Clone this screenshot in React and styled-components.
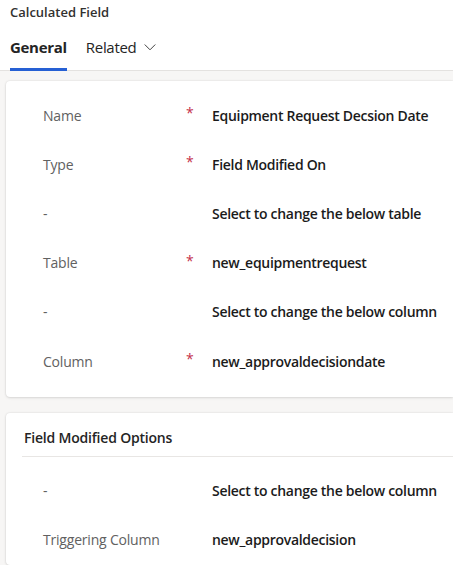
import React from 'react';
import styled, { createGlobalStyle } from 'styled-components';

const GlobalStyle = createGlobalStyle`
  html, body {
    margin: 0;
    padding: 0;
    background: #f7f6f5;
  }
  body {
    font-family: "Open Sans", "Noto Sans", sans-serif;
    color: #242424;
    width: 453px;
    height: 565px;
    overflow: hidden;
  }
`;

const Header = styled.div`
  background: #fff;
  padding: 3px 0 0 10px;
  border-bottom: 1px solid #e4e2e0;
`;

const Title = styled.div`
  font-size: 13px;
  font-weight: 600;
  color: #323130;
  height: 23px;
  line-height: 18px;
`;

const Tabs = styled.div`
  display: flex;
  gap: 19px;
  align-items: flex-end;
`;

const Tab = styled.div`
  font-size: 15px;
  font-weight: ${p => (p.$active ? 700 : 400)};
  letter-spacing: -0.3px;
  color: #242424;
  padding: 11px 0 11px;
  display: flex;
  align-items: center;
  gap: 7px;
  border-bottom: 3px solid ${p => (p.$active ? '#2660d4' : 'transparent')};
  margin-bottom: -1px;
`;

const Body = styled.div`
  padding: 10px 0 0 6px;
  display: flex;
  flex-direction: column;
  gap: 16px;
`;

const Card = styled.div`
  background: #fff;
  border-radius: 4px 0 0 4px;
  box-shadow: 0 0 2px rgba(0, 0, 0, 0.12), 0 1px 3px rgba(0, 0, 0, 0.1);
  padding: ${p => p.$pad || '0'};
`;

const CardTitle = styled.div`
  font-size: 14px;
  font-weight: 600;
  letter-spacing: -0.2px;
  color: #242424;
  margin: 0 0 0 16px;
  padding: 15px 0 9px 2px;
  border-bottom: 1px solid #e8e6e4;
`;

const CardRows = styled.div`
  padding-top: 9px;
`;

const Row = styled.div`
  display: grid;
  grid-template-columns: 143px 26px 1fr;
  align-items: center;
  height: 49.2px;
  padding-left: 37px;
`;

const Label = styled.div`
  font-size: 14px;
  letter-spacing: -0.2px;
  color: #616161;
`;

const Req = styled.div`
  color: #c4314b;
  font-size: 14px;
  line-height: 1;
  padding-bottom: 4px;
`;

const Value = styled.div`
  font-size: 14px;
  font-weight: 600;
  letter-spacing: -0.3px;
  color: #1b1b1b;
  white-space: nowrap;
`;

const Chevron = () => (
  <svg width="14" height="14" viewBox="0 0 14 14" fill="none">
    <path d="M2 4.8l5 5 5-5" stroke="#424242" strokeWidth="1" strokeLinecap="round" strokeLinejoin="round" />
  </svg>
);

const mainRows = [
  { label: 'Name', req: true, value: 'Equipment Request Decsion Date' },
  { label: 'Type', req: true, value: 'Field Modified On' },
  { label: '-', req: false, value: 'Select to change the below table' },
  { label: 'Table', req: true, value: 'new_equipmentrequest' },
  { label: '-', req: false, value: 'Select to change the below column' },
  { label: 'Column', req: true, value: 'new_approvaldecisiondate' },
];

const optionRows = [
  { label: '-', req: false, value: 'Select to change the below column' },
  { label: 'Triggering Column', req: false, value: 'new_approvaldecision' },
];

const FieldRow = ({ label, req, value }) => (
  <Row>
    <Label>{label}</Label>
    <Req>{req ? '*' : ''}</Req>
    <Value>{value}</Value>
  </Row>
);

export default function App() {
  return (
    <>
      <GlobalStyle />
      <Header>
        <Title>Calculated Field</Title>
        <Tabs>
          <Tab $active>General</Tab>
          <Tab>
            Related <Chevron />
          </Tab>
        </Tabs>
      </Header>
      <Body>
        <Card $pad="9.5px 0 11.5px">
          {mainRows.map((r, i) => (
            <FieldRow key={i} {...r} />
          ))}
        </Card>
        <Card>
          <CardTitle>Field Modified Options</CardTitle>
          <CardRows>
            {optionRows.map((r, i) => (
              <FieldRow key={i} {...r} />
            ))}
          </CardRows>
        </Card>
      </Body>
    </>
  );
}
